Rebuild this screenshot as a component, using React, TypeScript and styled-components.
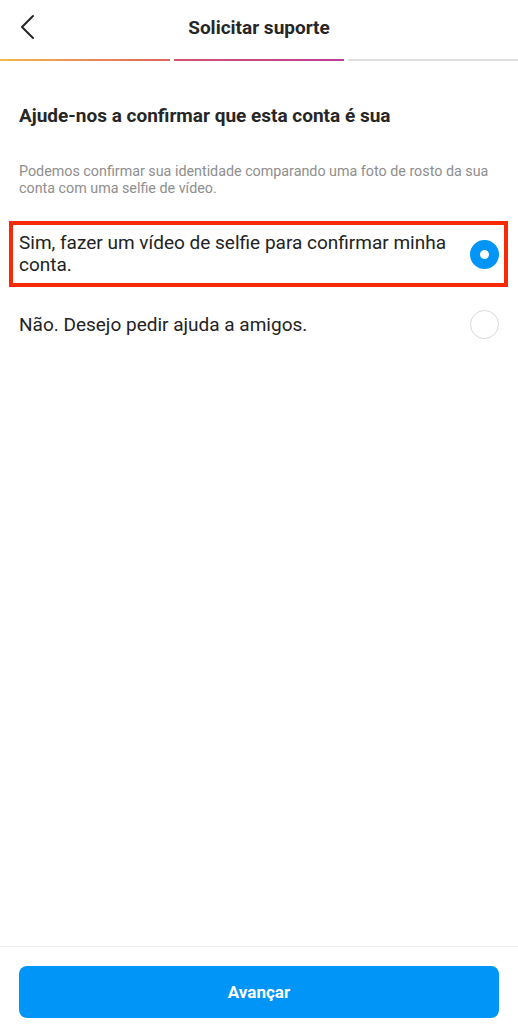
import React, { useState } from "react";
import styled, { createGlobalStyle } from "styled-components";

const GlobalStyle = createGlobalStyle`
  html, body {
    margin: 0;
    padding: 0;
    background: #fff;
  }
  body {
    font-family: Roboto, "Noto Sans", Arial, sans-serif;
    color: #262626;
  }
`;

const Screen = styled.div`
  width: 518px;
  height: 1024px;
  display: flex;
  flex-direction: column;
  background: #fff;
`;

const Header = styled.header`
  height: 54px;
  display: grid;
  grid-template-columns: 56px 1fr 56px;
  align-items: center;
`;

const BackButton = styled.button`
  border: none;
  background: none;
  padding: 0 0 0 19px;
  height: 40px;
  display: flex;
  align-items: center;
  cursor: pointer;
`;

const Title = styled.h1`
  margin: 0;
  text-align: center;
  font-size: 19px;
  font-weight: 700;
  color: #262626;
`;

const Progress = styled.div`
  display: grid;
  grid-template-columns: 1fr 1fr 1fr;
  gap: 4px;
  margin-top: 5px;
`;

const Step = styled.div<{ $bg: string }>`
  height: 2px;
  background: ${(p) => p.$bg};
`;

const Body = styled.main`
  flex: 1;
  padding: 43px 0 0;
`;

const Heading = styled.h2`
  margin: 0 19px;
  font-size: 19px;
  font-weight: 700;
  line-height: 24px;
  color: #262626;
`;

const Description = styled.p`
  margin: 35px 19px 0;
  font-size: 14.3px;
  line-height: 17px;
  color: #8e8e8e;
`;

const Options = styled.div`
  margin-top: 24px;
  display: flex;
  flex-direction: column;
`;

const Option = styled.label<{ $highlight?: boolean }>`
  display: flex;
  align-items: center;
  justify-content: space-between;
  gap: 12px;
  margin: 0 10px 0 9px;
  padding: ${(p) => (p.$highlight ? "7px 5px 7px 6px" : "23px 9px 0 10px")};
  border: ${(p) => (p.$highlight ? "4px solid #f62b06" : "none")};
  cursor: pointer;
`;

const OptionText = styled.span`
  font-size: 19px;
  line-height: 22px;
  color: #222;
`;

const Radio = styled.span<{ $checked: boolean }>`
  flex: none;
  width: 29px;
  height: 29px;
  border-radius: 50%;
  box-sizing: border-box;
  border: ${(p) => (p.$checked ? "10px solid #0095f6" : "1.5px solid #d8d8d8")};
  background: #fff;
`;

const Footer = styled.footer`
  border-top: 1px solid #ececec;
  padding: 19px 19px 6px;
`;

const PrimaryButton = styled.button`
  width: 100%;
  height: 52px;
  border: none;
  border-radius: 8px;
  background: #0095f6;
  color: #fff;
  font-family: Roboto, "Noto Sans", Arial, sans-serif;
  font-size: 17px;
  font-weight: 700;
  cursor: pointer;
`;

const options = [
  { id: "selfie", label: "Sim, fazer um vídeo de selfie para confirmar minha conta." },
  { id: "friends", label: "Não. Desejo pedir ajuda a amigos." },
];

export default function App() {
  const [selected, setSelected] = useState("selfie");

  return (
    <>
      <GlobalStyle />
      <Screen>
        <Header>
          <BackButton aria-label="Voltar">
            <svg width="16" height="26" viewBox="0 0 16 26" fill="none">
              <path d="M14 2 3 13l11 11" stroke="#262626" strokeWidth="2" strokeLinecap="round" strokeLinejoin="round" />
            </svg>
          </BackButton>
          <Title>Solicitar suporte</Title>
          <span />
        </Header>
        <Progress>
          <Step $bg="linear-gradient(90deg, #f2b84f, #e0645c)" />
          <Step $bg="linear-gradient(90deg, #d4546d, #c13a99)" />
          <Step $bg="#dedede" />
        </Progress>
        <Body>
          <Heading>Ajude-nos a confirmar que esta conta é sua</Heading>
          <Description>
            Podemos confirmar sua identidade comparando uma foto de rosto da sua conta com uma selfie de vídeo.
          </Description>
          <Options>
            {options.map((o, i) => (
              <Option key={o.id} $highlight={i === 0} onClick={() => setSelected(o.id)}>
                <OptionText>{o.label}</OptionText>
                <Radio $checked={selected === o.id} />
              </Option>
            ))}
          </Options>
        </Body>
        <Footer>
          <PrimaryButton>Avançar</PrimaryButton>
        </Footer>
      </Screen>
    </>
  );
}
